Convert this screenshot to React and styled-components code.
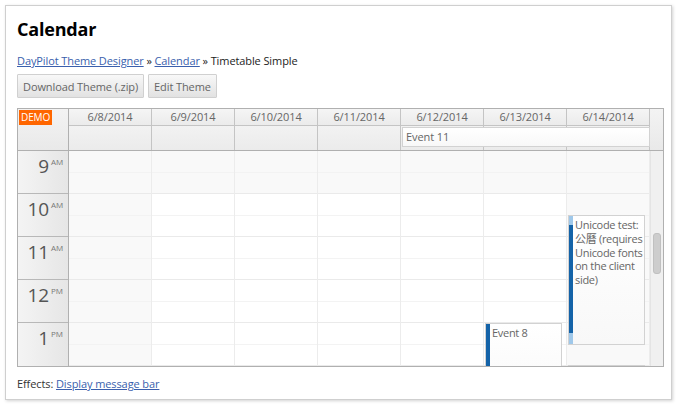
import React from "react";
import styled, { createGlobalStyle } from "styled-components";

const GlobalStyle = createGlobalStyle`
  html, body {
    margin: 0;
    padding: 0;
    background: #ffffff;
    font-family: "Open Sans", "Noto Sans", "Noto Sans CJK SC", sans-serif;
  }
  #root {
    padding: 5px;
  }
`;

const days = ["6/8/2014", "6/9/2014", "6/10/2014", "6/11/2014", "6/12/2014", "6/13/2014", "6/14/2014"];
const hours = [
  { n: "9", s: "AM" },
  { n: "10", s: "AM" },
  { n: "11", s: "AM" },
  { n: "12", s: "PM" },
  { n: "1", s: "PM" },
];
const HOUR = 43;

function App() {
  return (
    <>
      <GlobalStyle />
      <Panel>
        <Title>Calendar</Title>
        <Crumbs>
          <A href="#">DayPilot Theme Designer</A> » <A href="#">Calendar</A> » Timetable Simple
        </Crumbs>
        <Toolbar>
          <Button>Download Theme (.zip)</Button>
          <Button>Edit Theme</Button>
        </Toolbar>

        <Grid>
          <Header>
            <Corner>
              <Demo>DEMO</Demo>
            </Corner>
            <DayHeaders>
              <DateRow>
                {days.map((d) => (
                  <DateCell key={d}>{d}</DateCell>
                ))}
              </DateRow>
              <AllDayRow>
                {days.map((d, i) => (
                  <AllDayCell key={d}>
                    {i === 4 && <AllDayEvent>Event 11</AllDayEvent>}
                  </AllDayCell>
                ))}
              </AllDayRow>
            </DayHeaders>
            <HeaderSpacer />
          </Header>

          <Body>
            <Scroller>
              <Hours>
                {hours.map((h) => (
                  <HourCell key={h.n + h.s}>
                    <HourNum>{h.n}</HourNum>
                    <HourSuffix>{h.s}</HourSuffix>
                  </HourCell>
                ))}
              </Hours>
              {days.map((d, i) => (
                <DayColumn key={d}>
                  {hours.map((h, j) => {
                    const off = i === 0 || i === 6 || j === 0;
                    return (
                      <Slot key={j}>
                        <Half $off={off} />
                        <Half $off={off} $last />
                      </Slot>
                    );
                  })}
                  {i === 5 && (
                    <Event style={{ top: 4 * HOUR, height: 80 }}>
                      <Bar>
                        <BarFill style={{ top: 0, bottom: 0 }} />
                      </Bar>
                      <EventText>Event 8</EventText>
                    </Event>
                  )}
                  {i === 6 && (
                    <>
                      <Event style={{ top: 64, height: 130 }}>
                        <Bar>
                          <BarFill style={{ top: 9, bottom: 11 }} />
                        </Bar>
                        <EventText>
                          Unicode test: 公曆 (requires Unicode fonts on the client side)
                        </EventText>
                      </Event>
                      <Event style={{ top: 214, height: 60 }}>
                        <Bar>
                          <BarFill style={{ top: 0, bottom: 0 }} />
                        </Bar>
                      </Event>
                    </>
                  )}
                </DayColumn>
              ))}
            </Scroller>
            <ScrollTrack>
              <Thumb />
            </ScrollTrack>
          </Body>
        </Grid>

        <Effects>
          Effects: <A href="#">Display message bar</A>
        </Effects>
      </Panel>
    </>
  );
}

const Panel = styled.div`
  box-sizing: border-box;
  width: 667px;
  height: 395px;
  border: 1px solid #cfcfcf;
  box-shadow: 1px 1px 3px rgba(0, 0, 0, 0.18);
  background: #fff;
  padding: 10px 11px 0 11px;
  letter-spacing: -0.1px;
`;

const Title = styled.h1`
  margin: 0;
  font-size: 18px;
  line-height: 26px;
  font-weight: 700;
  color: #000;
  letter-spacing: -0.2px;
`;

const Crumbs = styled.div`
  margin-top: 11px;
  font-size: 11px;
  line-height: 16px;
  color: #222;
`;

const A = styled.a`
  color: #3a5fad;
  text-decoration: underline;
`;

const Toolbar = styled.div`
  display: flex;
  gap: 4px;
  margin-top: 5px;
`;

const Button = styled.button`
  height: 24px;
  padding: 0 5px;
  border: 1px solid #d0d0d0;
  border-radius: 1px;
  background: linear-gradient(to bottom, #f8f8f8, #e2e2e2);
  color: #666;
  font-family: inherit;
  font-size: 11px;
  letter-spacing: -0.1px;
`;

const Grid = styled.div`
  margin-top: 10px;
  width: 647px;
  box-sizing: border-box;
  border: 1px solid #b0b0b0;
  font-size: 11px;
  color: #666;
`;

const Header = styled.div`
  display: flex;
  height: 41px;
  border-bottom: 1px solid #b0b0b0;
`;

const Corner = styled.div`
  position: relative;
  width: 50px;
  border-right: 1px solid #b0b0b0;
  background: linear-gradient(to bottom, #f3f3f3, #e9e9e9);
`;

const Demo = styled.div`
  position: absolute;
  left: 1px;
  top: 1px;
  padding: 0 2px;
  height: 15px;
  line-height: 15px;
  background: #ff6600;
  color: #fff;
  font-size: 10px;
`;

const DayHeaders = styled.div`
  display: flex;
  flex-direction: column;
  width: 581px;
`;

const DateRow = styled.div`
  display: flex;
  height: 16px;
  border-bottom: 1px solid #c4c4c4;
`;

const DateCell = styled.div`
  box-sizing: border-box;
  width: 83px;
  border-right: 1px solid #c4c4c4;
  background: linear-gradient(to bottom, #f5f5f5, #ebebeb);
  text-align: center;
  line-height: 16px;
`;

const AllDayRow = styled.div`
  display: flex;
  flex: 1;
`;

const AllDayCell = styled.div`
  position: relative;
  box-sizing: border-box;
  width: 83px;
  border-right: 1px solid #c4c4c4;
  background: linear-gradient(to bottom, #f2f2f2, #ebebeb);
`;

const AllDayEvent = styled.div`
  position: absolute;
  left: 1px;
  top: 1px;
  width: 248px;
  height: 20px;
  box-sizing: border-box;
  border: 1px solid #d2d2d2;
  background: linear-gradient(to bottom, #ffffff, #f8f8f8);
  padding: 0 3px;
  line-height: 18px;
  z-index: 1;
`;

const HeaderSpacer = styled.div`
  flex: 1;
  background: linear-gradient(to bottom, #f3f3f3, #e9e9e9);
`;

const Body = styled.div`
  display: flex;
  height: ${HOUR * 5}px;
  overflow: hidden;
`;

const Scroller = styled.div`
  display: flex;
  align-items: flex-start;
  width: 632px;
`;

const Hours = styled.div`
  width: 50px;
  border-right: 1px solid #b0b0b0;
`;

const HourCell = styled.div`
  box-sizing: border-box;
  height: ${HOUR}px;
  border-bottom: 1px solid #b8b8b8;
  background: linear-gradient(to right, #f4f4f4, #e6e6e6);
  display: flex;
  justify-content: flex-end;
  padding: 3px 4px 0 0;
  color: #555;
  &:last-child {
    border-bottom: none;
  }
`;

const HourNum = styled.span`
  font-size: 19px;
  line-height: 24px;
`;

const HourSuffix = styled.span`
  font-size: 8px;
  line-height: 10px;
  margin-left: 2px;
  padding-top: 3px;
  min-width: 13px;
  color: #777;
`;

const DayColumn = styled.div`
  position: relative;
  box-sizing: border-box;
  width: 83px;
  border-right: 1px solid #ececec;
`;

const Slot = styled.div`
  height: ${HOUR}px;
  display: flex;
  flex-direction: column;
`;

const Half = styled.div`
  box-sizing: border-box;
  flex: 1;
  background: ${(p) => (p.$off ? "#f9f9f9" : "#ffffff")};
  border-bottom: 1px solid ${(p) => (p.$last ? "#eaeaea" : "#f3f3f3")};
`;

const Event = styled.div`
  position: absolute;
  left: 1px;
  right: 4px;
  box-sizing: border-box;
  border: 1px solid #d2d2d2;
  background: linear-gradient(to bottom, #ffffff, #f8f8f8);
  overflow: hidden;
`;

const Bar = styled.div`
  position: absolute;
  left: 0;
  top: 0;
  bottom: 0;
  width: 4px;
  background: #9fc8ea;
`;

const BarFill = styled.div`
  position: absolute;
  left: 0;
  width: 4px;
  background: #1463a8;
`;

const EventText = styled.div`
  padding: 2px 0 0 6px;
  line-height: 13.8px;
  font-size: 11px;
  letter-spacing: -0.3px;
  color: #666;
`;

const ScrollTrack = styled.div`
  position: relative;
  flex: 1;
  background: #f0f0f0;
  border-left: 1px solid #e4e4e4;
`;

const Thumb = styled.div`
  position: absolute;
  left: 2px;
  right: 2px;
  top: 82px;
  height: 41px;
  border-radius: 3px;
  background: #cdcdcd;
  border: 1px solid #c0c0c0;
  box-sizing: border-box;
`;

const Effects = styled.div`
  margin-top: 9px;
  font-size: 11px;
  color: #333;
`;

export default App;
